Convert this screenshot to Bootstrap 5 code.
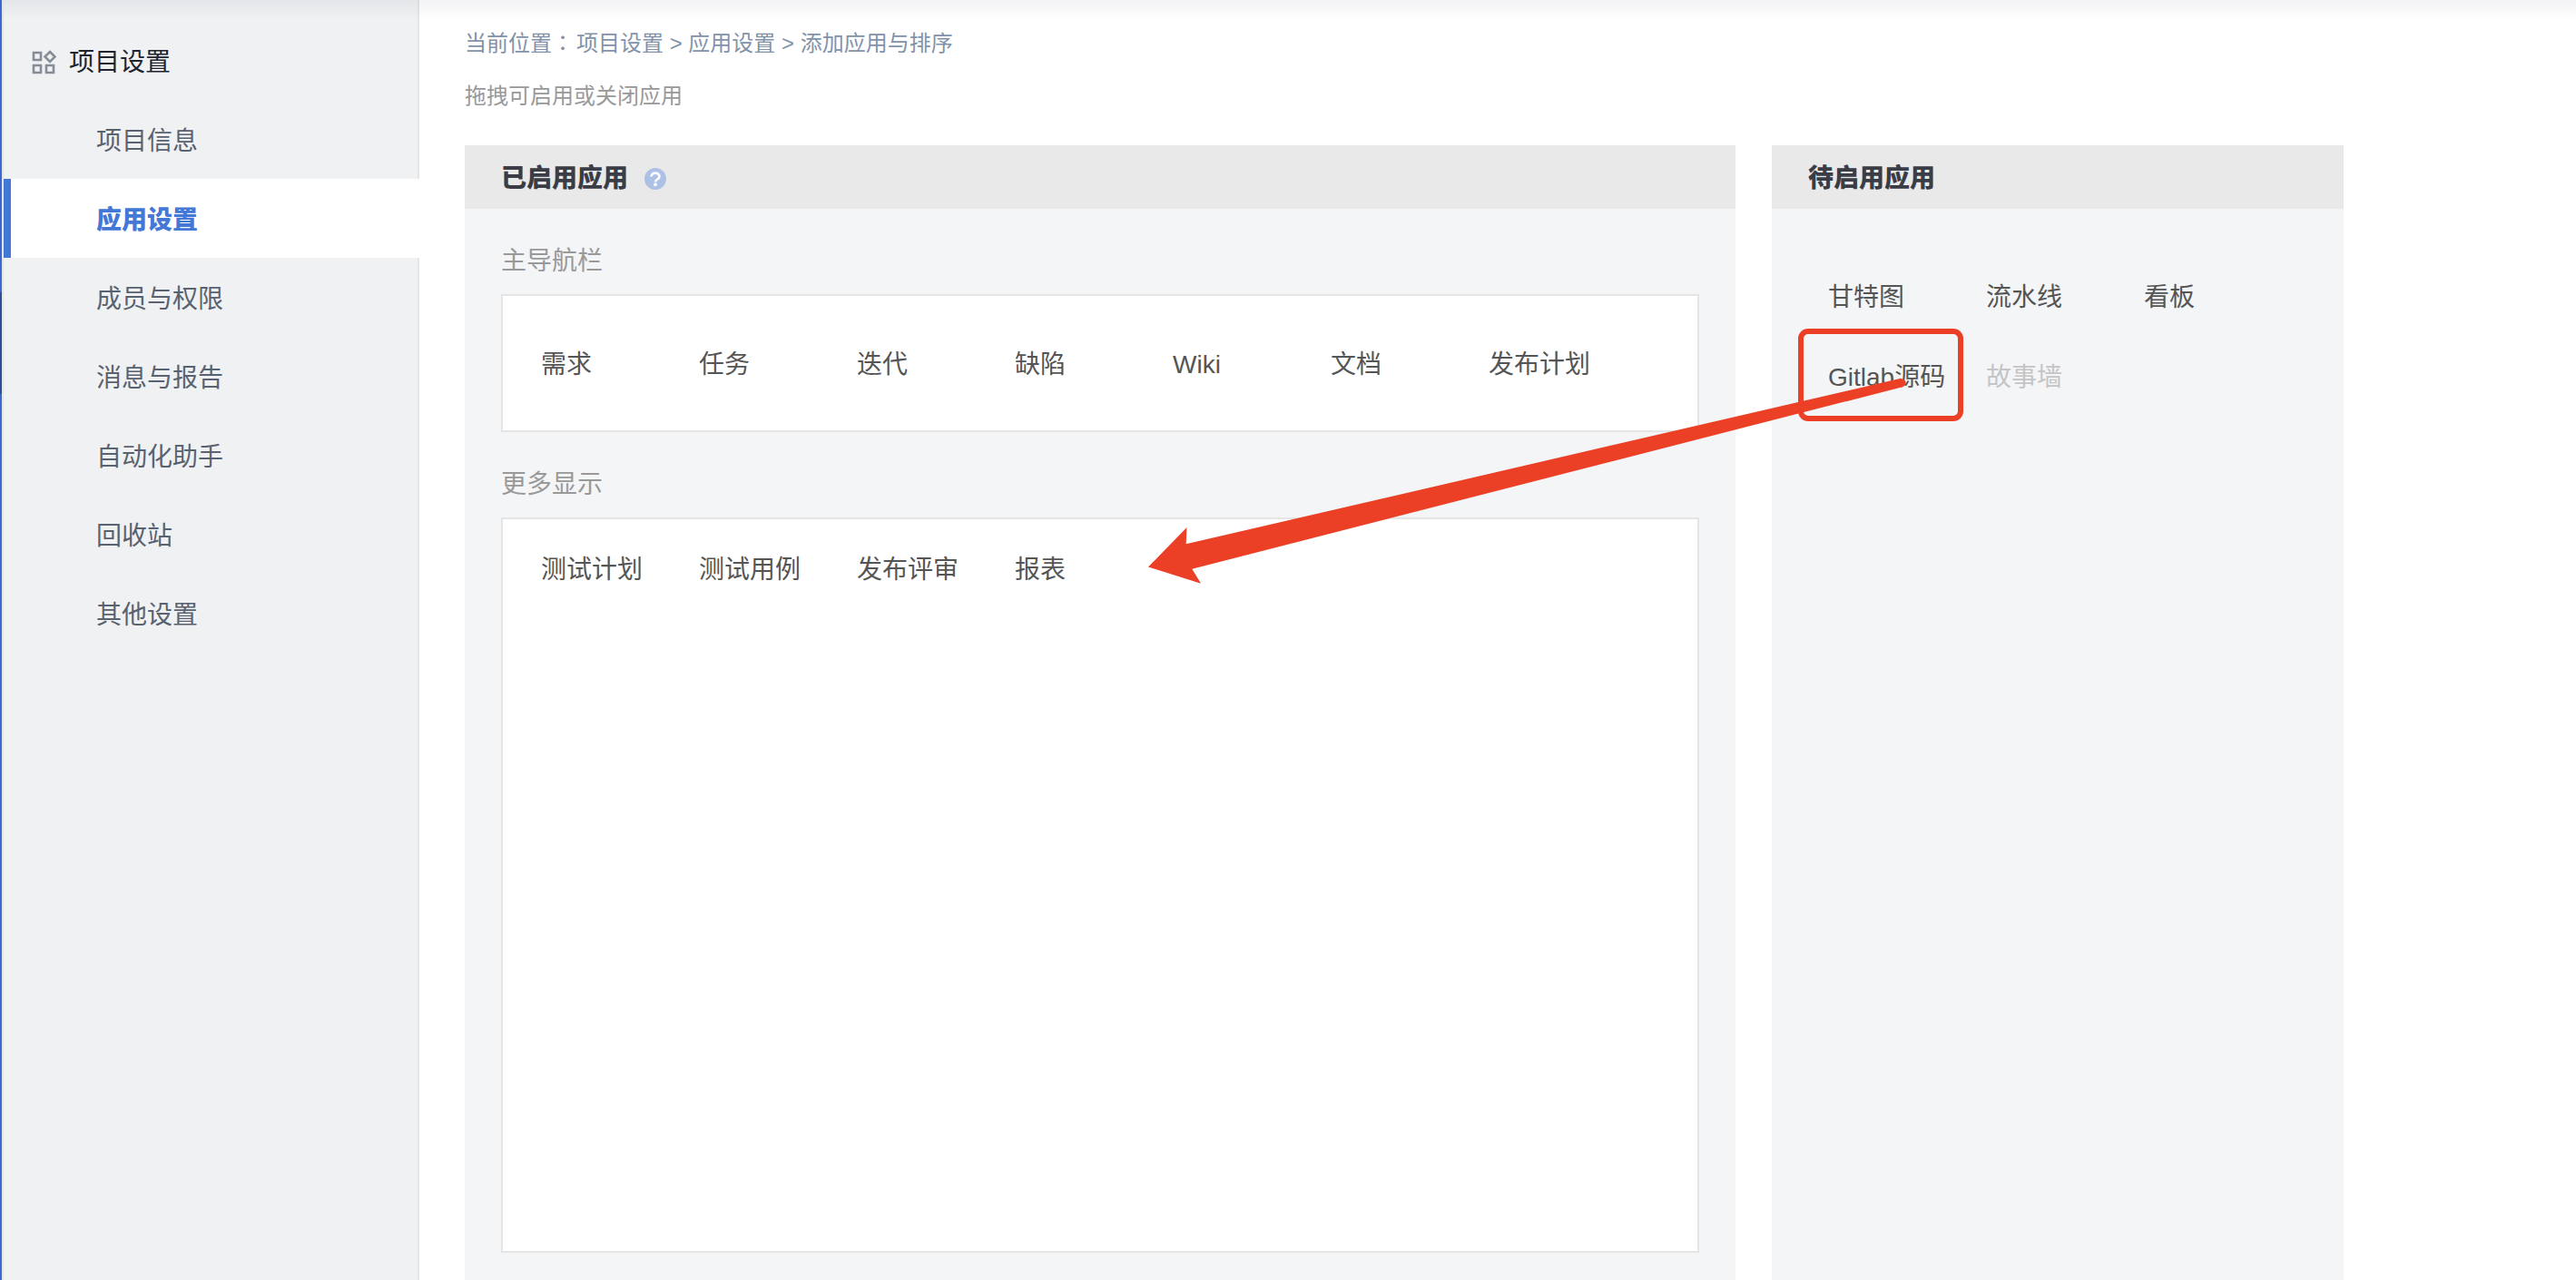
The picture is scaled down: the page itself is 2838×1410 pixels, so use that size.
<!DOCTYPE html>
<html lang="zh-CN">
<head>
<meta charset="utf-8">
<meta name="viewport" content="width=device-width, initial-scale=1">
<title>添加应用与排序</title>
<link href="https://cdn.jsdelivr.net/npm/bootstrap@5.3.0/dist/css/bootstrap.min.css" rel="stylesheet">
<style>
  body { font-family: "Liberation Sans", "Noto Sans CJK SC", sans-serif; font-weight: 400; font-size: 28px; line-height: 40px; color: #555; background: #fff; }
  a { text-decoration: none; }
  .page-shade { height: 22px; left: 4px; background: linear-gradient(rgba(20, 20, 60, .05), rgba(20, 20, 60, 0)); pointer-events: none; }
  .edge-strip { width: 2px; background: linear-gradient(#3a69cb 322px, #2b4f94 322px, #2b4f94 434px, #3a69cb 434px); }
  .side-panel { width: 460px; background: #f0f1f3; border-left: 2px solid #e5e6e8; }
  .side-title { height: 110px; padding: 28px 0 0 30px; gap: 14px; color: #20242f; border-right: 2px solid #e5e5e5; }
  .side-title h1 { font-size: 28px; line-height: 40px; font-weight: 400; }
  .side-link { height: 87px; padding: 4px 0 0 102px; color: #596270; border-right: 2px solid #e5e5e5; }
  .side-link.active { padding-left: 94px; background: #fff; color: #4378d6; font-weight: 900; border-left: 8px solid #4378d6; border-right-color: #fff; }
  .side-rest { border-right: 2px solid #e5e5e5; }
  .workspace { padding: 30px 50px 0; }
  .crumbs, .hint { font-size: 24px; line-height: 32px; }
  .crumbs { color: #8292aa; margin-bottom: 26px; }
  .crumbs a { color: inherit; }
  .crumb-colon { font-family: "Noto Sans CJK TC", sans-serif; margin-right: 3px; }
  .hint { color: #999; margin-bottom: 38px; }
  .boards { max-width: 2070px; gap: 40px; }
  .board { background: #f4f5f7; flex: 63 1 0; min-width: 0; }
  .board-wide { flex-grow: 140; }
  .board-head { height: 70px; padding: 4px 40px 0; gap: 18px; background: #e9e9e9; color: #3a3d46; }
  .board-head h2 { font-size: 28px; line-height: 40px; font-weight: 900; }
  .board-body { padding: 38px 40px 30px; }
  .zone-label { font-size: 28px; line-height: 40px; font-weight: 400; color: #999; margin: 0 0 16px; }
  .drop-zone { background: #fff; border: 2px solid #e5e5e5; padding: 30px 42px; }
  .drop-zone-first { margin-bottom: 38px; }
  .drop-zone-more { padding-top: 10px; }
  .idle-zone { padding: 52px 40px 52px 62px; }
  .app-chip { width: 174px; height: 88px; padding-top: 4px; white-space: nowrap; cursor: move; }
  .app-chip.locked { color: #c4c4c6; }
  .marker-frame { left: -33px; top: -8px; width: 182px; height: 102px; border: 6px solid #eb4025; border-radius: 11px; pointer-events: none; }
  .marker-arrow { right: 88px; top: 40px; pointer-events: none; z-index: 2; }
</style>
<script src="https://cdn.jsdelivr.net/npm/bootstrap@5.3.0/dist/js/bootstrap.bundle.min.js"></script>
</head>
<body>
<div class="page-shade position-absolute top-0 end-0"></div>
<div class="d-flex min-vh-100">
  <div class="edge-strip flex-shrink-0"></div>
  <aside class="side-panel flex-shrink-0 d-flex flex-column">
    <div class="side-title d-flex align-items-center">
      <svg width="28" height="28" viewBox="0 0 28 28" fill="none" stroke="#858d96" stroke-width="2.600" aria-hidden="true">
        <path d="M3 3h8v8H3zM3 17h8v8H3zM17 17h8v8h-8zM21 2l5.500 5.500-5.500 5.500-5.500-5.500z"/>
      </svg>
      <h1 class="m-0">项目设置</h1>
    </div>
    <nav class="nav flex-column flex-nowrap" aria-label="项目设置">
      <a class="side-link d-flex align-items-center" href="#">项目信息</a>
      <a class="side-link active d-flex align-items-center" href="#" aria-current="page">应用设置</a>
      <a class="side-link d-flex align-items-center" href="#">成员与权限</a>
      <a class="side-link d-flex align-items-center" href="#">消息与报告</a>
      <a class="side-link d-flex align-items-center" href="#">自动化助手</a>
      <a class="side-link d-flex align-items-center" href="#">回收站</a>
      <a class="side-link d-flex align-items-center" href="#">其他设置</a>
    </nav>
    <div class="side-rest flex-grow-1"></div>
  </aside>
  <main class="workspace flex-grow-1 d-flex flex-column">
    <nav class="crumbs" aria-label="当前位置">当前位置<span class="crumb-colon" lang="zh-TW">：</span><a href="#">项目设置</a> &gt; <a href="#">应用设置</a> &gt; <span>添加应用与排序</span></nav>
    <p class="hint">拖拽可启用或关闭应用</p>
    <div class="boards d-flex flex-grow-1">
      <section class="board board-wide d-flex flex-column">
        <header class="board-head d-flex align-items-center">
          <h2 class="m-0">已启用应用</h2>
          <button type="button" class="btn p-0 border-0 d-flex" aria-label="帮助">
            <svg width="24" height="24" viewBox="0 0 24 24" aria-hidden="true">
              <circle cx="12" cy="12" r="12" fill="#adc1e6"/>
              <path d="M7.500 9.500c0-5.200 9-5.200 9 0 0 3-4.500 3-4.500 6" fill="none" stroke="#fff" stroke-width="2.600"/>
              <circle cx="12" cy="18.300" r="1.900" fill="#fff"/>
            </svg>
          </button>
        </header>
        <div class="board-body d-flex flex-column flex-grow-1">
          <h3 class="zone-label">主导航栏</h3>
          <div class="drop-zone drop-zone-first d-flex flex-wrap">
            <div class="app-chip d-flex align-items-center">需求</div>
            <div class="app-chip d-flex align-items-center">任务</div>
            <div class="app-chip d-flex align-items-center">迭代</div>
            <div class="app-chip d-flex align-items-center">缺陷</div>
            <div class="app-chip d-flex align-items-center">Wiki</div>
            <div class="app-chip d-flex align-items-center">文档</div>
            <div class="app-chip d-flex align-items-center">发布计划</div>
          </div>
          <h3 class="zone-label">更多显示</h3>
          <div class="drop-zone drop-zone-more d-flex flex-wrap align-content-start flex-grow-1">
            <div class="app-chip d-flex align-items-center">测试计划</div>
            <div class="app-chip d-flex align-items-center">测试用例</div>
            <div class="app-chip d-flex align-items-center">发布评审</div>
            <div class="app-chip d-flex align-items-center">报表</div>
          </div>
        </div>
      </section>
      <section class="board">
        <header class="board-head d-flex align-items-center">
          <h2 class="m-0">待启用应用</h2>
        </header>
        <div class="idle-zone d-flex flex-wrap">
          <div class="app-chip d-flex align-items-center">甘特图</div>
          <div class="app-chip d-flex align-items-center">流水线</div>
          <div class="app-chip d-flex align-items-center">看板</div>
          <div class="app-chip d-flex align-items-center position-relative">Gitlab源码
            <span class="marker-frame position-absolute"></span>
            <svg class="marker-arrow position-absolute" width="840" height="240" viewBox="1260 410 840 240" aria-hidden="true">
              <path d="M1265 624.500L1307.500 581L1306.700 599.300L2091 417.500C2100 415.500 2103 424 2095 426.500L1313.300 626.700L1323 642.800Z" fill="#eb4025"/>
            </svg>
          </div>
          <div class="app-chip locked d-flex align-items-center">故事墙</div>
        </div>
      </section>
    </div>
  </main>
</div>
</body>
</html>
